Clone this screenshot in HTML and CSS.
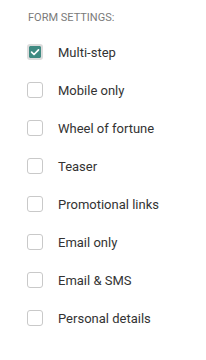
FILE: index.html
```html
<!DOCTYPE html>
<html lang="en">
<head>
<meta charset="UTF-8">
<meta name="viewport" content="width=device-width, initial-scale=1.0">
<title>Form settings</title>
<link rel="stylesheet" href="styles.css">
</head>
<body>
    <div class="settings">
        <div class="title">FORM SETTINGS:</div>
        <ul class="options">
            <li class="option"><span class="box checked"><svg viewBox="0 0 12 12" width="12" height="12"><path d="M2.6 6.2 L5 8.5 L9.5 3.8" fill="none" stroke="#fff" stroke-width="1.7" stroke-linecap="round" stroke-linejoin="round"/></svg></span><span class="label">Multi-step</span></li>
            <li class="option"><span class="box"></span><span class="label">Mobile only</span></li>
            <li class="option"><span class="box"></span><span class="label">Wheel of fortune</span></li>
            <li class="option"><span class="box"></span><span class="label">Teaser</span></li>
            <li class="option"><span class="box"></span><span class="label">Promotional links</span></li>
            <li class="option"><span class="box"></span><span class="label">Email only</span></li>
            <li class="option"><span class="box"></span><span class="label">Email &amp; SMS</span></li>
            <li class="option"><span class="box"></span><span class="label">Personal details</span></li>
        </ul>
    </div>
</body>
</html>
```
FILE: styles.css
```css
  body {
    margin: 0;
    font-family: Roboto, "Liberation Sans", Arial, sans-serif;
    background-color: #fff;
  }
  .settings {
    padding: 10px 0 0 27px;
  }
  .title {
    font-size: 11px;
    line-height: 15px;
    color: #7a7a7a;
    margin-left: 1px;
    margin-bottom: 8px;
  }
  .options {
    list-style: none;
    margin: 0;
    padding: 0;
  }
  .option {
    display: flex;
    align-items: center;
    height: 38px;
  }
  .box {
    width: 14px;
    height: 14px;
    border: 1px solid #c9c9c9;
    border-radius: 3px;
    box-sizing: content-box;
    display: flex;
    align-items: center;
    justify-content: center;
  }
  .box.checked {
    width: 12px;
    height: 12px;
    border: 2px solid #dcdcdc;
    background-color: #3f8a82;
    background-clip: padding-box;
  }
  .label {
    margin-left: 15px;
    font-size: 13px;
    color: #333;
  }
```
